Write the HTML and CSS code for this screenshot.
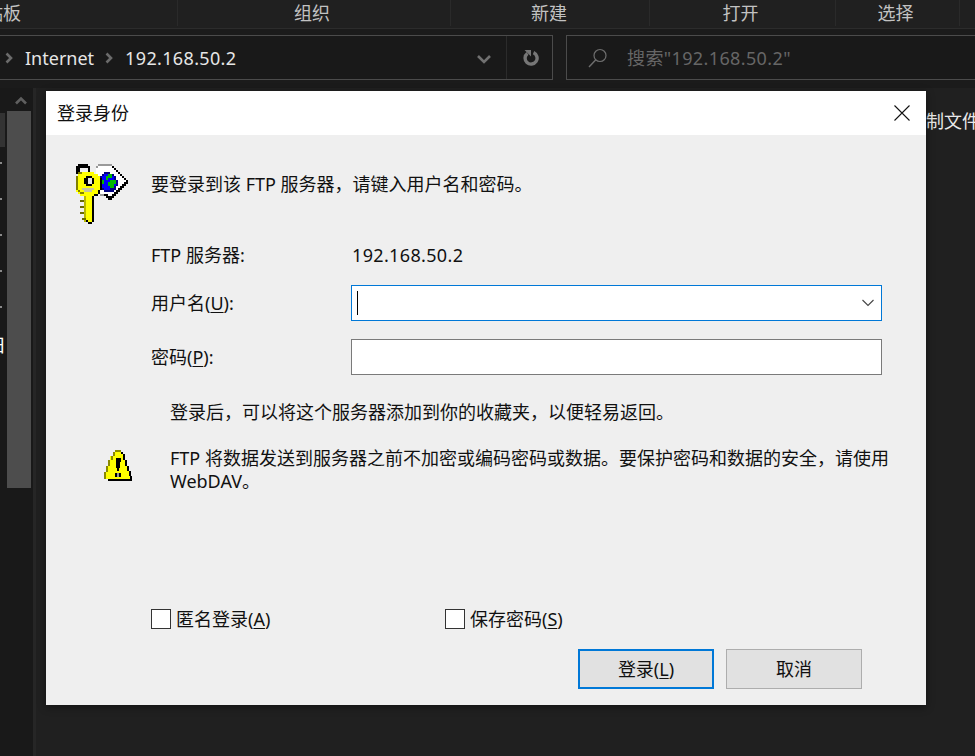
FILE: index.html
```html
<!DOCTYPE html>
<html lang="zh-CN">
<head>
<meta charset="utf-8">
<title>登录身份</title>
<link rel="stylesheet" href="styles.css">
</head>
<body>
<div class="explorer">
  <div class="ribbon">
    <div class="group group-clip"><span class="clip-label">剪贴板</span></div>
    <div class="group group-org">组织</div>
    <div class="group group-new">新建</div>
    <div class="group group-open">打开</div>
    <div class="group group-select">选择</div>
  </div>
  <div class="addressbar">
    <div class="path">
      <svg class="crumb" width="8" height="12" viewBox="0 0 8 12"><path d="M1.500 1.500 6 6l-4.500 4.500" fill="none" stroke="#6b6b6b" stroke-width="2.600"/></svg>
      <span class="crumb-text">Internet</span>
      <svg class="crumb" width="8" height="12" viewBox="0 0 8 12"><path d="M1.500 1.500 6 6l-4.500 4.500" fill="none" stroke="#6b6b6b" stroke-width="2.600"/></svg>
      <span class="crumb-text digits">192.168.50.2</span>
      <svg class="path-drop" width="14" height="10" viewBox="0 0 14 10"><path d="M1 2l6 6 6-6" fill="none" stroke="#707070" stroke-width="2.600"/></svg>
      <div class="refresh">
        <svg width="18" height="18" viewBox="0 0 18 18"><path d="M6.500 4.300A6 6 0 1 0 12.500 3.600" fill="none" stroke="#767676" stroke-width="3.400"/><path d="M3.500 1 10 1 10 7.500z" fill="#767676"/></svg>
      </div>
    </div>
    <div class="search">
      <svg width="22" height="22" viewBox="0 0 22 22"><circle cx="13" cy="8.500" r="6" fill="none" stroke="#6e6e6e" stroke-width="1.200"/><path d="M8.800 12.800 2 20" fill="none" stroke="#6e6e6e" stroke-width="1.400"/></svg>
      <span class="search-text">搜索"192.168.50.2"</span>
    </div>
  </div>
  <div class="main">
    <div class="sidebar">
      <div class="nav">
        <div class="nav-selected"></div>
        <div class="nav-dots">
          <span class="dot"></span><span class="dot"></span><span class="dot"></span><span class="dot"></span><span class="dot"></span>
        </div>
        <span class="nav-char">日</span>
      </div>
      <div class="scrollbar">
        <svg class="scroll-up" width="12" height="9" viewBox="0 0 12 9"><path d="M1 7.500l5-5 5 5" fill="none" stroke="#5f5f5f" stroke-width="2.600"/></svg>
        <div class="thumb"></div>
      </div>
    </div>
    <div class="content"><span class="copy-text">复制文件</span></div>
  </div>
</div>

<div class="dialog">
  <div class="titlebar">
    <span class="title">登录身份</span>
    <svg class="close" width="16" height="16" viewBox="0 0 16 16"><path d="M.5.500l15 15M15.500.500l-15 15" fill="none" stroke="#111" stroke-width="1.100"/></svg>
  </div>
  <div class="dialog-body">
    <div class="intro">
      <svg class="key-icon" width="64" height="64" viewBox="0 0 32 32" shape-rendering="crispEdges">
        <polygon points="12,2 20,2 28,10 19,19 12,14" fill="#fff"/>
        <path d="M20 2h1v1h1v1h1v1h1v1h1v1h1v1h1v1h1v2h-1v1h-1v1h-1v1h-1v1h-1v1h-1v1h-1v1h-1v1h-2v-1h-1v-1h-1v-1h2v1h2v-1h1v-1h1v-1h1v-1h1v-1h1v-1h1v-1h1v-1h-1v-1h-1v-1h-1v-1h-1v-1h-1v-1h-1v-1h-1z" fill="#000"/>
        <path d="M13 1h7v1h-7zM12 2h1v1h-1zM14 16h2v1h-2z" fill="#9a9a9a"/>
        <path d="M16 5h3v1h2v1h1v2h1v3h-1v2h-1v1h-5v-1h-1v-1h-1V7h1V6h1z" fill="#000080"/>
        <path d="M16 6h3v1h2v2h1v3h-1v1h-2v1h-3v-1h-1v-1h-1V8h1V7h1z" fill="#0000ff"/>
        <path d="M18 6h2v2h-2v1h-1V7h1zM19 9h3v2h-1v2h-2v-1h-1v-2h1zM14 9h2v2h-1v2h-1z" fill="#00b800"/>
        <path d="M3 1h5v1h1v4H8V3H4v3H3V2zM2 2h1v4H2z" fill="#000"/>
        <path d="M4 5h7v1h2v1h1v7h-1v2h-2v1h-1v13h-1v1H8v-1H7v-2H6v-2h1v-1H6v-2h1v-1H6v-2h1v-1H6v-2H4v-1H3v-1H2V7h1V6h1z" fill="#ffff00"/>
        <path d="M2 7h1v7H2zM3 5h2v1H3zM3 14h1v1H3zM4 15h2v1H4z" fill="#808000"/>
        <path d="M6 17h1v13H6z" fill="#b8b800"/>
        <path d="M4 19h2v1H4zM4 22h2v1H4zM4 25h2v1H4zM5 28h2v1H5z" fill="#6a6a00"/>
        <path d="M10 17h1v13h-1zM8 30h2v1H8zM7 29h1v1H7z" fill="#000"/>
        <path d="M11 16h2v1h-2zM13 14h1v2h-1zM14 8h1v6h-1z" fill="#000"/>
        <path d="M7 7h3v1h1v3h-1v1H7v-1H6V8h1z" fill="#000"/>
        <path d="M8 8h2v3H8z" fill="#e4e4e4"/>
        <path d="M5 13h6v1h-1v1H6v-1H5z" fill="#c4c4a0"/>
      </svg>
      <span class="intro-text">要登录到该 FTP 服务器，请键入用户名和密码。</span>
    </div>
    <div class="form">
      <span>FTP 服务器:</span>
      <span class="server digits">192.168.50.2</span>
      <span class="label"><span>用户名(<u>U</u>):</span></span>
      <div class="field field-focus">
        <span class="caret"></span>
        <svg width="12" height="8" viewBox="0 0 12 8"><path d="M.5 1 6 6.500 11.500 1" fill="none" stroke="#444" stroke-width="1.100"/></svg>
      </div>
      <span class="label"><span>密码(<u>P</u>):</span></span>
      <div class="field"></div>
    </div>
    <p class="note">登录后，可以将这个服务器添加到你的收藏夹，以便轻易返回。</p>
    <div class="warning">
      <svg class="warn-icon" width="30" height="32" viewBox="0 0 30 32" shape-rendering="crispEdges">
        <polygon points="11,0 17,0 17,2 19,2 19,8 21,8 21,14 23,14 23,20 25,20 25,24 26,24 26,29 0,29 0,22 2,22 2,16 4,16 4,10 6,10 6,6 9,6 9,2 11,2" fill="#ffff00"/>
        <path d="M11 0h6v2h-6zM9 2h2v4H9zM7 6h2v4H7zM4 10h2v6H4zM2 16h2v6H2zM0 22h2v7H0z" fill="#8a8a00"/>
        <path d="M17 2h2v2h-2zM19 4h2v6h-2zM21 10h2v6h-2zM23 16h2v5h-2zM25 21h2v5h-2zM26 26h2v5h-2zM4 29h24v2H4z" fill="#000"/>
        <path d="M12 8h5v4h-1v6h-1v3h-2v-3h-1z" fill="#000"/>
        <path d="M11 23h6v4h-6z" fill="#000"/>
        <path d="M13 23h2v4h-2z" fill="#9a9a9a"/>
      </svg>
      <p class="warn-text">FTP 将数据发送到服务器之前不加密或编码密码或数据。要保护密码和数据的安全，请使用 WebDAV。</p>
    </div>
    <div class="checks">
      <label class="check check-anon"><span class="box"></span><span>匿名登录(<u>A</u>)</span></label>
      <label class="check"><span class="box"></span><span>保存密码(<u>S</u>)</span></label>
    </div>
    <div class="buttons">
      <div class="btn btn-default">登录(<u>L</u>)</div>
      <div class="btn">取消</div>
    </div>
  </div>
</div>
</body>
</html>
```
FILE: styles.css
```css
* { box-sizing: border-box; }
html, body { margin: 0; height: 100%; }
body {
  width: 975px;
  height: 756px;
  overflow: hidden;
  position: relative;
  background: #202020;
  font-family: "Noto Sans", "Noto Sans CJK SC", sans-serif;
  font-size: 18px;
  line-height: 24px;
  color: #111;
}
p { margin: 0; }
u { text-underline-offset: 2px; text-decoration-thickness: 1px; }
.digits { letter-spacing: .35px; }

.explorer { display: flex; flex-direction: column; height: 756px; }

.ribbon {
  display: flex;
  height: 29px;
  flex: none;
  background: #202020;
  border-bottom: 1px solid #2c2c2c;
  color: #c2c2c2;
  overflow: hidden;
}
.group {
  height: 26px;
  display: flex;
  align-items: center;
  justify-content: center;
  border-right: 1px solid #2a2a2a;
  flex: none;
  padding-right: 4px;
}
.group-clip { width: 178px; justify-content: flex-start; padding-right: 0; }
.clip-label { margin-left: -33px; }
.group-org { width: 273px; }
.group-new { width: 199px; padding-right: 2px; }
.group-open { width: 186px; }
.group-select { width: 124px; }

.addressbar {
  display: flex;
  gap: 13px;
  flex: none;
  height: 59px;
  padding: 6px 0 8px;
  background: #1b1b1b;
}
.path {
  width: 554px;
  margin-left: -1px;
  flex: none;
  display: flex;
  align-items: center;
  border: 1px solid #4b4b4b;
  background: #191919;
  color: #e6e6e6;
  padding-left: 5px;
}
.crumb { flex: none; }
.crumb-text { margin: 0 11px 0 12px; }
.path-drop { margin-left: auto; margin-right: 15px; margin-top: 2px; }
.refresh {
  width: 46px;
  height: 100%;
  flex: none;
  display: flex;
  align-items: center;
  justify-content: center;
  border-left: 1px solid #2b2b2b;
}
.search {
  flex: 1;
  margin-right: -4px;
  display: flex;
  align-items: center;
  gap: 18px;
  padding-left: 20px;
  border: 1px solid #4b4b4b;
  background: #191919;
  color: #666;
}
.search-text { letter-spacing: .38px; }

.main { flex: 1; display: flex; min-height: 0; }
.sidebar {
  width: 36px;
  flex: none;
  display: flex;
  background: #191919;
  border-right: 3px solid #262626;
}
.nav { width: 7px; flex: none; position: relative; overflow: hidden; padding-top: 25px; }
.nav-selected { height: 34px; width: 5px; background: #333; }
.nav-dots { display: flex; flex-direction: column; gap: 34px; margin-top: 15px; }
.dot { width: 2px; height: 2px; background: #8a8a8a; display: block; }
.nav-char {
  display: block;
  margin: 27px 0 0 -12px;
  color: #fff;
  line-height: 20px;
}
.scrollbar { width: 24px; flex: none; display: flex; flex-direction: column; align-items: center; }
.scroll-up { margin: 8px 0 0 3px; flex: none; }
.thumb { width: 24px; height: 377px; margin-top: 6px; background: #4d4d4d; }
.content { flex: 1; background: #202020; display: flex; justify-content: flex-end; padding-top: 21px; }
.copy-text { color: #e8e8e8; margin-right: -5px; height: 24px; white-space: nowrap; }

.dialog {
  position: absolute;
  left: 46px;
  top: 91px;
  width: 880px;
  height: 614px;
  display: flex;
  flex-direction: column;
  background: #efefef;
  box-shadow: 0 2px 8px rgba(0,0,0,.45);
}
.titlebar {
  height: 44px;
  flex: none;
  background: #fff;
  display: flex;
  align-items: center;
  justify-content: space-between;
  padding: 0 16px 0 11px;
  color: #111;
}
.close { flex: none; margin-top: -1px; }
.dialog-body { flex: 1; display: flex; flex-direction: column; min-height: 0; }

.intro { display: flex; align-items: flex-start; padding: 27px 0 0 26px; gap: 15px; }
.key-icon { flex: none; }
.intro-text { margin-top: 10px; }

.form {
  display: grid;
  grid-template-columns: 200px 531px;
  grid-auto-rows: auto;
  row-gap: 18px;
  margin: 17px 0 0 105px;
  align-items: center;
}
.server { padding-left: 1px; }
.label { display: flex; align-items: center; }
.field {
  height: 36px;
  background: #fff;
  border: 1px solid #7a7a7a;
  display: flex;
  align-items: center;
  justify-content: space-between;
}
.field-focus { border-color: #0078d7; padding: 0 7px 0 5px; }
.caret { width: 1px; height: 24px; background: #000; }

.note { margin: 25px 0 0 124px; }
.warning { display: flex; align-items: flex-start; margin: 23px 0 0 58px; gap: 36px; }
.warn-icon { flex: none; margin-top: 3px; }
.warn-text { width: 722px; line-height: 23px; margin-left: 0; }

.checks { margin: auto 0 0 105px; display: flex; }
.check { display: flex; align-items: center; gap: 5px; }
.check-anon { width: 294px; }
.box { width: 20px; height: 20px; background: #fff; border: 1px solid #333; flex: none; }

.buttons { display: flex; justify-content: flex-end; gap: 12px; padding: 18px 64px 16px 0; }
.btn {
  width: 136px;
  height: 40px;
  background: #e1e1e1;
  border: 1px solid #adadad;
  display: flex;
  align-items: center;
  justify-content: center;
}
.btn-default { border: 2px solid #0078d7; }
```
